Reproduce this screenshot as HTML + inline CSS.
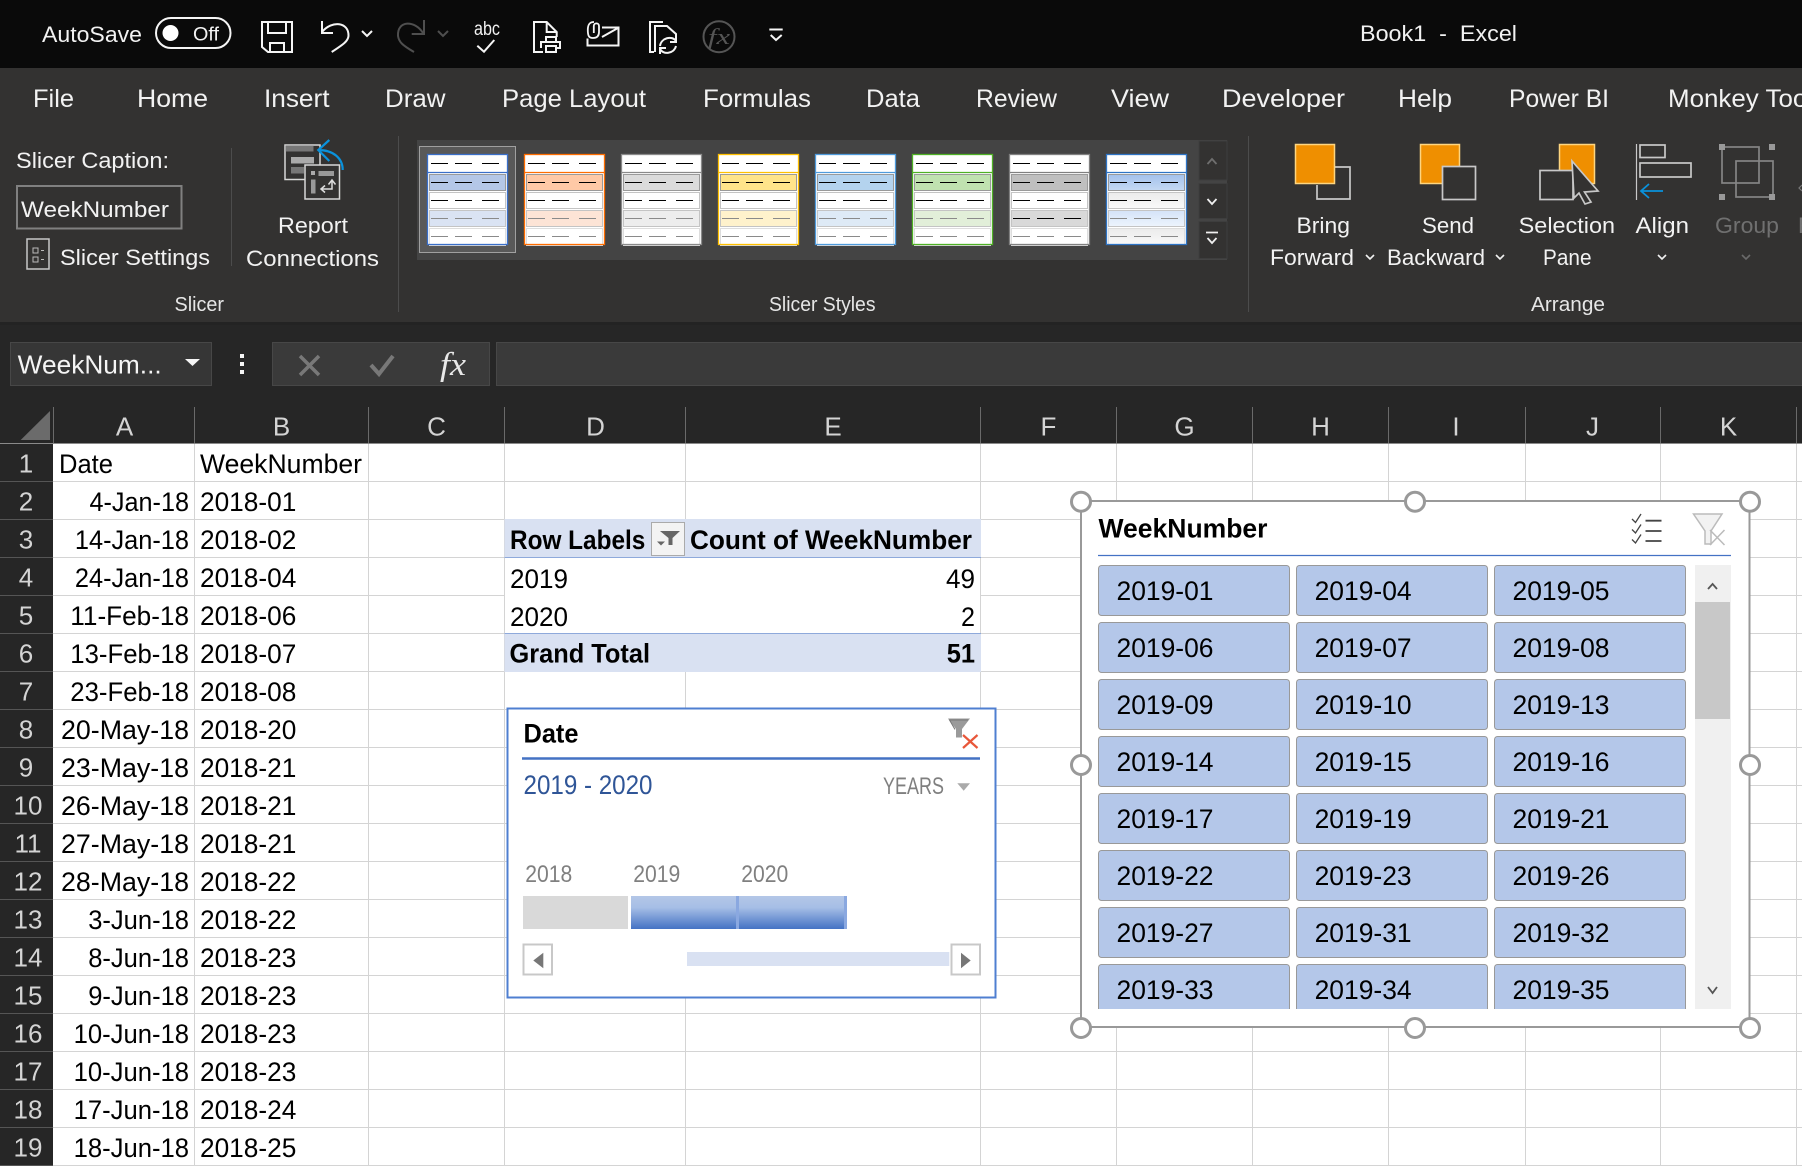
<!DOCTYPE html>
<html><head><meta charset="utf-8"><title>Book1 - Excel</title>
<style>
html,body{margin:0;padding:0;background:#fff;width:1802px;height:1166px;overflow:hidden}
svg{display:block;font-family:"Liberation Sans",sans-serif}
.w{fill:#f2f2f2}
.tab{fill:#f2f2f2;font-size:25px}
.lb{fill:#f2f2f2;font-size:22.5px}
.grp{fill:#e6e6e6;font-size:20px}
.hd{fill:#d4d4d4;font-size:26px;text-anchor:middle}
.c{fill:#000;font-size:27px;transform:translateY(.5px)}
.b{fill:#000;font-size:27px;font-weight:bold}
.s{fill:#000;font-size:27px}
.ic{fill:none;stroke:#f5f5f5;stroke-width:2}
.gr{stroke:#d4d4d4;stroke-width:1;fill:none}
.hdl{fill:#fff;stroke:#999;stroke-width:3}
.btn{fill:#b4c7e9;stroke:#999;stroke-width:1}
</style></head><body>
<svg width="1802" height="1166" viewBox="0 0 1802 1166" xmlns="http://www.w3.org/2000/svg">
<defs>
<linearGradient id="bar" x1="0" y1="0" x2="0" y2="1"><stop offset="0" stop-color="#b4c7e7"/><stop offset=".35" stop-color="#a6bee6"/><stop offset="1" stop-color="#4472c4"/></linearGradient>
<linearGradient id="g1" x1="0" y1="0" x2="0" y2="1"><stop offset="0" stop-color="#a3c1ec"/><stop offset="1" stop-color="#c5d9f3"/></linearGradient>
<linearGradient id="g2" x1="0" y1="0" x2="0" y2="1"><stop offset="0" stop-color="#ebebeb"/><stop offset="1" stop-color="#f9f9f9"/></linearGradient>
<linearGradient id="g3" x1="0" y1="0" x2="0" y2="1"><stop offset="0" stop-color="#d4e3f8"/><stop offset="1" stop-color="#edf4fd"/></linearGradient>
<g id="t">
<rect x=".5" y=".5" width="80" height="90" fill="#fff"/>
<path d="M0 18.5H81" stroke="var(--b)" stroke-width="1.2"/>
<rect x="2.5" y="20.5" width="76" height="16" fill="var(--f1)" stroke="#9a9a9a"/>
<rect x="2.5" y="38.5" width="76" height="16" fill="#fff" stroke="#c4c4c4"/>
<rect x="2.5" y="56.5" width="76" height="16" fill="var(--f2)" stroke="#c4c4c4"/>
<rect x="2.5" y="74.5" width="76" height="17" fill="#fff" stroke="#ddd"/>
<path d="M4 9.5h17M28 9.5h17M55 9.5h17M4 28.5h17M28 28.5h17M55 28.5h17M4 46.5h17M28 46.5h17M55 46.5h17" stroke="#000" stroke-width="1"/>
<path d="M4 64.5h17M28 64.5h17M55 64.5h17" stroke="var(--l,#8a8a8a)" stroke-width="1"/>
<path d="M4 82.5h17M28 82.5h17M55 82.5h17" stroke="#8a8a8a" stroke-width="1"/>
<rect x=".5" y=".5" width="80" height="90" fill="none" stroke="var(--b)" stroke-width="1.3"/>
</g>
</defs>

<!-- title bar -->
<rect width="1802" height="68" fill="#0a0a0a"/>
<rect y="68" width="1802" height="254" fill="#333231"/>
<rect y="322" width="1802" height="844" fill="#262626"/>
<rect y="322" width="1802" height="3" fill="#232323"/>

<text class="w" x="42" y="42" font-size="22" textLength="100" lengthAdjust="spacingAndGlyphs">AutoSave</text>
<rect x="156" y="18" width="74.500" height="30" rx="15" fill="none" stroke="#f5f5f5" stroke-width="2"/>
<circle cx="170.500" cy="33" r="8" fill="#fff"/>
<text class="w" x="193" y="40.500" font-size="19" textLength="26" lengthAdjust="spacingAndGlyphs">Off</text>

<!-- save -->
<path class="ic" d="M262 22H292V52H268L262 47ZM268 22V33H286V22M270 52V43H284V52"/>
<!-- undo -->
<path class="ic" d="M322 21V33H333M322 32C332 20 349 22 348.500 36C348 41 344 44 331.700 52"/>
<path class="ic" d="M362 31L367 36L372 31"/>
<!-- redo -->
<path class="ic" style="stroke:#4f4f4f" d="M424 20V34H411.700M423 33C415 20 397 20 398 36C399 42 402 45 414 52"/>
<path class="ic" style="stroke:#4f4f4f" d="M438 31L443 36L448 31"/>
<!-- spell -->
<text class="w" x="474" y="35" font-size="19" textLength="26" lengthAdjust="spacingAndGlyphs">abc</text>
<path class="ic" d="M477.300 45.700L484 51.700L494.300 40"/>
<!-- print -->
<path class="ic" d="M543 52H534V22H546.700L556.700 32V37M546.700 22V32H556.700M546 42V37H556V42M541 48V42H560V48H556M546 46H556V52H546Z"/>
<!-- mail -->
<path class="ic" d="M602 27.500H618.500V45.500H587.500V38.500M602 37L618 28"/>
<path class="ic" style="stroke-width:1.800" d="M594 22C588.500 22 587.800 26 587.800 30C587.800 36 589 38 593 38C597 38 599 36 599 32V26C599 22.500 593.800 22.500 593.800 26V33"/>
<!-- doc refresh -->
<path class="ic" d="M654 52H650V22H663M655 52V26H667L676 34V38"/>
<path class="ic" d="M660 46C661 38 672 35 676 41M676 36V42H670M676 46C674 54 663 55 660 49M660 54V48H666"/>
<!-- fx -->
<circle cx="719" cy="36.700" r="15.500" fill="none" stroke="#555" stroke-width="2"/>
<text x="708" y="44" font-size="22" font-style="italic" font-family="Liberation Serif,serif" fill="#555" textLength="22" lengthAdjust="spacingAndGlyphs">fx</text>
<!-- qat more -->
<path class="ic" d="M769.300 29.500H782.700M770.700 35L776 40L781.700 35"/>

<text class="w" x="1360" y="41" font-size="22" textLength="157" lengthAdjust="spacingAndGlyphs" style="white-space:pre">Book1  -  Excel</text>

<!-- tabs -->
<text class="tab" x="33" y="107" textLength="41" lengthAdjust="spacingAndGlyphs">File</text>
<text class="tab" x="137" y="107" textLength="71" lengthAdjust="spacingAndGlyphs">Home</text>
<text class="tab" x="264" y="107" textLength="65.500" lengthAdjust="spacingAndGlyphs">Insert</text>
<text class="tab" x="385" y="107" textLength="60.500" lengthAdjust="spacingAndGlyphs">Draw</text>
<text class="tab" x="502" y="107" textLength="144" lengthAdjust="spacingAndGlyphs">Page Layout</text>
<text class="tab" x="703" y="107" textLength="108" lengthAdjust="spacingAndGlyphs">Formulas</text>
<text class="tab" x="866" y="107" textLength="54" lengthAdjust="spacingAndGlyphs">Data</text>
<text class="tab" x="976" y="107" textLength="81" lengthAdjust="spacingAndGlyphs">Review</text>
<text class="tab" x="1111" y="107" textLength="58" lengthAdjust="spacingAndGlyphs">View</text>
<text class="tab" x="1222" y="107" textLength="123" lengthAdjust="spacingAndGlyphs">Developer</text>
<text class="tab" x="1398" y="107" textLength="54" lengthAdjust="spacingAndGlyphs">Help</text>
<text class="tab" x="1509" y="107" textLength="100" lengthAdjust="spacingAndGlyphs">Power BI</text>
<text class="tab" x="1668" y="107" textLength="158" lengthAdjust="spacingAndGlyphs">Monkey Tools</text>

<!-- slicer group -->
<text class="lb" x="16" y="168" textLength="153" lengthAdjust="spacingAndGlyphs">Slicer Caption:</text>
<rect x="17" y="186" width="164.500" height="42.500" fill="#333231" stroke="#808080" stroke-width="2"/>
<text class="lb" x="21" y="217" textLength="148" lengthAdjust="spacingAndGlyphs">WeekNumber</text>
<rect x="27" y="239" width="22" height="30" fill="none" stroke="#c8c8c8" stroke-width="1.500"/>
<path d="M33 248h5v5h-5zM33 257h5v5h-5z" fill="none" stroke="#bbb" stroke-width="1"/>
<path d="M41 250.500h3M41 259.500h3" stroke="#bbb"/>
<text class="lb" x="60" y="265" textLength="150" lengthAdjust="spacingAndGlyphs">Slicer Settings</text>
<path d="M231.500 148V266M398.500 136V312" stroke="#4c4c4c" stroke-width="1"/>
<!-- report connections -->
<rect x="285" y="145" width="35" height="34.500" fill="none" stroke="#d8d8d8" stroke-width="1.500"/>
<rect x="285.500" y="145.500" width="28" height="6" fill="#777"/>
<rect x="291" y="157" width="23" height="6.500" fill="#aaa"/>
<rect x="291" y="167" width="13" height="6.500" fill="#777"/>
<rect x="305" y="165" width="34.500" height="34" fill="#333231" stroke="#d8d8d8" stroke-width="1.500"/>
<rect x="311" y="171" width="4" height="4" fill="#aaa"/>
<rect x="318.500" y="171" width="15.500" height="5" fill="#999"/>
<rect x="311" y="179.500" width="4.500" height="14" fill="#999"/>
<path d="M332 181V189H321.500M328.500 184.500L332 180L335.500 184.500M325 185.500L321 189L325 192.500" fill="none" stroke="#ddd" stroke-width="1.500"/>
<path d="M342.700 170C342.700 158 333 150 318.300 150M329.300 140L318.300 150L329.300 161" fill="none" stroke="#0a92dc" stroke-width="2.200"/>
<text class="lb" x="278" y="233" textLength="70" lengthAdjust="spacingAndGlyphs">Report</text>
<text class="lb" x="246" y="266" textLength="133" lengthAdjust="spacingAndGlyphs">Connections</text>
<text class="grp" x="174.500" y="311" textLength="49.500" lengthAdjust="spacingAndGlyphs">Slicer</text>

<!-- gallery -->
<rect x="417" y="140" width="810" height="120" fill="#444"/>
<rect x="419.500" y="146.500" width="96" height="106" fill="#595959" stroke="#a0a0a0" stroke-width="1"/>
<use href="#t" x="427" y="154" style="--b:#3a6fc9;--f1:#b4c7e7;--f2:#dae3f3"/>
<use href="#t" x="524" y="154" style="--b:#ff6d00;--f1:#ffc9a6;--f2:#fde4d6"/>
<use href="#t" x="621" y="154" style="--b:#8a8a8a;--f1:#dbdbdb;--f2:#ededed"/>
<use href="#t" x="718" y="154" style="--b:#ffc000;--f1:#ffe48a;--f2:#fff2cc"/>
<use href="#t" x="815" y="154" style="--b:#4f9bdc;--f1:#b4d3ee;--f2:#deeaf6"/>
<use href="#t" x="912" y="154" style="--b:#4fb125;--f1:#c0e2b0;--f2:#e2efd9"/>
<use href="#t" x="1009" y="154" style="--b:#808080;--f1:#bfbfbf;--f2:#d9d9d9;--l:#000"/>
<!-- gradient tile -->
<rect x="1106.500" y="154.500" width="80" height="90" fill="#fff"/>
<path d="M1106 172.500H1187" stroke="#2e74c5" stroke-width="1.200"/>
<rect x="1108.500" y="174.500" width="76" height="16" fill="url(#g1)" stroke="#9a9a9a"/>
<rect x="1108.500" y="192.500" width="76" height="16" fill="url(#g2)" stroke="#c4c4c4"/>
<rect x="1108.500" y="210.500" width="76" height="16" fill="url(#g3)" stroke="#c4c4c4"/>
<rect x="1108.500" y="228.500" width="76" height="16" fill="url(#g2)" stroke="#ddd"/>
<path d="M1110 163.500h17M1134 163.500h17M1161 163.500h17M1110 182.500h17M1134 182.500h17M1161 182.500h17M1110 200.500h17M1134 200.500h17M1161 200.500h17" stroke="#000"/>
<path d="M1110 218.500h17M1134 218.500h17M1161 218.500h17M1110 236.500h17M1134 236.500h17M1161 236.500h17" stroke="#8a8a8a"/>
<rect x="1106.500" y="154.500" width="80" height="90" fill="none" stroke="#2e74c5" stroke-width="1.300"/>

<rect x="1199" y="141" width="28" height="39" fill="#333231" stroke="#3e3e3e"/>
<rect x="1199" y="183.500" width="28" height="35" fill="#333231" stroke="#3e3e3e"/>
<rect x="1199" y="221.500" width="28" height="37" fill="#333231" stroke="#3e3e3e"/>
<path d="M1207.500 164L1212 159L1216.500 164" fill="none" stroke="#6f6f6f" stroke-width="1.800"/>
<path d="M1207.500 199L1212 204L1216.500 199" fill="none" stroke="#f0f0f0" stroke-width="1.800"/>
<path d="M1206 232.500H1218M1207.500 238L1212 243L1216.500 238" fill="none" stroke="#f0f0f0" stroke-width="1.800"/>
<text class="grp" x="769" y="311" textLength="106.500" lengthAdjust="spacingAndGlyphs">Slicer Styles</text>
<path d="M1248.500 136V312" stroke="#4c4c4c" stroke-width="1"/>

<!-- arrange -->
<path d="M1335 167H1350V199H1317V185" fill="none" stroke="#c8c8c8" stroke-width="1.700"/>
<rect x="1295.500" y="144.500" width="39" height="39" fill="#ef8f00" stroke="#fdd580" stroke-width="1.500"/>
<rect x="1420.500" y="144.500" width="39" height="39" fill="#ef8f00" stroke="#fdd580" stroke-width="1.500"/>
<rect x="1442.500" y="166.500" width="33" height="33" fill="#333231" stroke="#c8c8c8" stroke-width="1.700"/>
<rect x="1559.500" y="144.500" width="35" height="39" fill="#ef8f00" stroke="#fdd580" stroke-width="1.500"/>
<rect x="1540" y="170.500" width="33" height="29" fill="#333231" stroke="#c8c8c8" stroke-width="1.700"/>
<path d="M1572 161L1598 191L1584.500 192L1591 202L1585 204L1579 193L1574 198Z" fill="#333231" stroke="#c8c8c8" stroke-width="1.700"/>
<path d="M1636.500 144V200" stroke="#c8c8c8" stroke-width="1.200"/>
<rect x="1640" y="145" width="25" height="12.500" fill="none" stroke="#c8c8c8" stroke-width="1.700"/>
<rect x="1640" y="163" width="51" height="14" fill="none" stroke="#c8c8c8" stroke-width="1.700"/>
<path d="M1663 191H1641M1649 184L1641 191L1649 198" fill="none" stroke="#0a92dc" stroke-width="1.800"/>
<rect x="1722" y="147" width="37" height="36" fill="none" stroke="#858585" stroke-width="1.700"/>
<rect x="1736" y="161" width="37" height="36" fill="none" stroke="#858585" stroke-width="1.700"/>
<path d="M1719.500 144.500h5v5h-5zM1769.500 144.500h5v5h-5zM1719.500 194.500h5v5h-5zM1769.500 194.500h5v5h-5z" fill="#999" stroke="#999"/>
<path d="M1802 185L1799 188L1802 191" fill="none" stroke="#777" stroke-width="1.200"/>
<text class="lb" x="1296.500" y="233" textLength="53.500" lengthAdjust="spacingAndGlyphs">Bring</text>
<text class="lb" x="1270" y="265" textLength="84" lengthAdjust="spacingAndGlyphs">Forward</text>
<text class="lb" x="1422" y="233" textLength="52" lengthAdjust="spacingAndGlyphs">Send</text>
<text class="lb" x="1387" y="265" textLength="98" lengthAdjust="spacingAndGlyphs">Backward</text>
<text class="lb" x="1518.700" y="233" textLength="96.300" lengthAdjust="spacingAndGlyphs">Selection</text>
<text class="lb" x="1543" y="265" textLength="48.500" lengthAdjust="spacingAndGlyphs">Pane</text>
<text class="lb" x="1635.500" y="233" textLength="53.500" lengthAdjust="spacingAndGlyphs">Align</text>
<text class="lb" style="fill:#707070" x="1715" y="233" textLength="64" lengthAdjust="spacingAndGlyphs">Group</text>
<text class="lb" style="fill:#707070" x="1798" y="233">R</text>
<path d="M1366 255L1370 259L1374 255M1496 255L1500 259L1504 255M1658 255L1662 259L1666 255" fill="none" stroke="#f0f0f0" stroke-width="1.600"/>
<path d="M1742 255L1746 259L1750 255" fill="none" stroke="#6a6a6a" stroke-width="1.600"/>
<text class="grp" x="1531" y="311" textLength="74" lengthAdjust="spacingAndGlyphs">Arrange</text>

<!-- formula bar -->
<rect x="10.500" y="342.500" width="201" height="43" fill="#363636" stroke="#474747"/>
<text x="17.700" y="373.500" font-size="26" fill="#f5f5f5" textLength="144" lengthAdjust="spacingAndGlyphs">WeekNum...</text>
<path d="M185 359H200L192.500 366Z" fill="#f5f5f5"/>
<path d="M240 354h4v4h-4zM240 362h4v4h-4zM240 370h4v4h-4z" fill="#f5f5f5"/>
<rect x="272.500" y="342.500" width="217" height="43" fill="#3a3a3a" stroke="#474747"/>
<path d="M300 356L319 375M319 356L300 375" stroke="#787878" stroke-width="3.500" fill="none"/>
<path d="M371 365L379 374L393 356" stroke="#787878" stroke-width="4" fill="none"/>
<text x="440" y="375" font-family="Liberation Serif,serif" font-style="italic" font-size="33" fill="#e8e8e8" textLength="26" lengthAdjust="spacingAndGlyphs">fx</text>
<rect x="496.500" y="342.500" width="1306" height="43" fill="#3a3a3a" stroke="#474747"/>

<!-- column headers -->
<path d="M20.700 440L50 411V440Z" fill="#6b6b6b"/>
<path d="M53.500 407V443M194.500 407V443M368.500 407V443M504.500 407V443M685.500 407V443M980.500 407V443M1116.500 407V443M1252.500 407V443M1388.500 407V443M1525.500 407V443M1660.500 407V443M1796.500 407V443" stroke="#6a6a6a" stroke-width="1"/>
<text class="hd" x="124.500" y="435.500">A</text>
<text class="hd" x="281.500" y="435.500">B</text>
<text class="hd" x="436.500" y="435.500">C</text>
<text class="hd" x="595.500" y="435.500">D</text>
<text class="hd" x="833" y="435.500">E</text>
<text class="hd" x="1048.500" y="435.500">F</text>
<text class="hd" x="1184.500" y="435.500">G</text>
<text class="hd" x="1320.500" y="435.500">H</text>
<text class="hd" x="1456" y="435.500">I</text>
<text class="hd" x="1592.500" y="435.500">J</text>
<text class="hd" x="1728.500" y="435.500">K</text>

<!-- sheet -->
<rect x="53" y="443" width="1749" height="723" fill="#fff"/>
<rect y="443" width="1802" height="1" fill="#8a8a8a"/>
<path d="M0 481.500H53M0 519.500H53M0 557.500H53M0 595.500H53M0 633.500H53M0 671.500H53M0 709.500H53M0 747.500H53M0 785.500H53M0 823.500H53M0 861.500H53M0 899.500H53M0 937.500H53M0 975.500H53M0 1013.500H53M0 1051.500H53M0 1089.500H53M0 1127.500H53M0 1165.500H53" stroke="#555"/>
<path class="gr" d="M194.500 444V1166M368.500 444V1166M504.500 444V1166M685.500 444V1166M980.500 444V1166M1116.500 444V1166M1252.500 444V1166M1388.500 444V1166M1525.500 444V1166M1660.500 444V1166M1796.500 444V1166"/>
<path class="gr" d="M53 481.500H1802M53 519.500H1802M53 557.500H1802M53 595.500H1802M53 633.500H1802M53 671.500H1802M53 709.500H1802M53 747.500H1802M53 785.500H1802M53 823.500H1802M53 861.500H1802M53 899.500H1802M53 937.500H1802M53 975.500H1802M53 1013.500H1802M53 1051.500H1802M53 1089.500H1802M53 1127.500H1802M53 1165.500H1802"/>

<!-- row numbers -->
<g fill="#d4d4d4" font-size="26" text-anchor="middle">
<text x="26" y="472.700">1</text><text x="26" y="510.700">2</text><text x="26" y="548.700">3</text><text x="26" y="586.700">4</text><text x="26" y="624.700">5</text><text x="26" y="662.700">6</text><text x="26" y="700.700">7</text><text x="26" y="738.700">8</text><text x="26" y="776.700">9</text><text x="28" y="814.700">10</text><text x="28" y="852.700">11</text><text x="28" y="890.700">12</text><text x="28" y="928.700">13</text><text x="28" y="966.700">14</text><text x="28" y="1004.700">15</text><text x="28" y="1042.700">16</text><text x="28" y="1080.700">17</text><text x="28" y="1118.700">18</text><text x="28" y="1156.700">19</text>
</g>

<!-- column A -->
<text class="c" x="59" y="472.700" textLength="54" lengthAdjust="spacingAndGlyphs">Date</text>
<text class="c" x="89.500" y="510.700" textLength="99.500" lengthAdjust="spacingAndGlyphs">4-Jan-18</text>
<text class="c" x="74.900" y="548.700" textLength="114.100" lengthAdjust="spacingAndGlyphs">14-Jan-18</text>
<text class="c" x="74.900" y="586.700" textLength="114.100" lengthAdjust="spacingAndGlyphs">24-Jan-18</text>
<text class="c" x="70.300" y="624.700" textLength="118.700" lengthAdjust="spacingAndGlyphs">11-Feb-18</text>
<text class="c" x="70.300" y="662.700" textLength="118.700" lengthAdjust="spacingAndGlyphs">13-Feb-18</text>
<text class="c" x="70.300" y="700.700" textLength="118.700" lengthAdjust="spacingAndGlyphs">23-Feb-18</text>
<text class="c" x="61" y="738.700" textLength="128" lengthAdjust="spacingAndGlyphs">20-May-18</text>
<text class="c" x="61" y="776.700" textLength="128" lengthAdjust="spacingAndGlyphs">23-May-18</text>
<text class="c" x="61" y="814.700" textLength="128" lengthAdjust="spacingAndGlyphs">26-May-18</text>
<text class="c" x="61" y="852.700" textLength="128" lengthAdjust="spacingAndGlyphs">27-May-18</text>
<text class="c" x="61" y="890.700" textLength="128" lengthAdjust="spacingAndGlyphs">28-May-18</text>
<text class="c" x="88.200" y="928.700" textLength="100.800" lengthAdjust="spacingAndGlyphs">3-Jun-18</text>
<text class="c" x="88.200" y="966.700" textLength="100.800" lengthAdjust="spacingAndGlyphs">8-Jun-18</text>
<text class="c" x="88.200" y="1004.700" textLength="100.800" lengthAdjust="spacingAndGlyphs">9-Jun-18</text>
<text class="c" x="73.600" y="1042.700" textLength="115.400" lengthAdjust="spacingAndGlyphs">10-Jun-18</text>
<text class="c" x="73.600" y="1080.700" textLength="115.400" lengthAdjust="spacingAndGlyphs">10-Jun-18</text>
<text class="c" x="73.600" y="1118.700" textLength="115.400" lengthAdjust="spacingAndGlyphs">17-Jun-18</text>
<text class="c" x="73.600" y="1156.700" textLength="115.400" lengthAdjust="spacingAndGlyphs">18-Jun-18</text>
<!-- column B -->
<text class="c" x="200" y="472.700" textLength="162" lengthAdjust="spacingAndGlyphs">WeekNumber</text>
<text class="c" x="200" y="510.700" textLength="96.300" lengthAdjust="spacingAndGlyphs">2018-01</text>
<text class="c" x="200" y="548.700" textLength="96.300" lengthAdjust="spacingAndGlyphs">2018-02</text>
<text class="c" x="200" y="586.700" textLength="96.300" lengthAdjust="spacingAndGlyphs">2018-04</text>
<text class="c" x="200" y="624.700" textLength="96.300" lengthAdjust="spacingAndGlyphs">2018-06</text>
<text class="c" x="200" y="662.700" textLength="96.300" lengthAdjust="spacingAndGlyphs">2018-07</text>
<text class="c" x="200" y="700.700" textLength="96.300" lengthAdjust="spacingAndGlyphs">2018-08</text>
<text class="c" x="200" y="738.700" textLength="96.300" lengthAdjust="spacingAndGlyphs">2018-20</text>
<text class="c" x="200" y="776.700" textLength="96.300" lengthAdjust="spacingAndGlyphs">2018-21</text>
<text class="c" x="200" y="814.700" textLength="96.300" lengthAdjust="spacingAndGlyphs">2018-21</text>
<text class="c" x="200" y="852.700" textLength="96.300" lengthAdjust="spacingAndGlyphs">2018-21</text>
<text class="c" x="200" y="890.700" textLength="96.300" lengthAdjust="spacingAndGlyphs">2018-22</text>
<text class="c" x="200" y="928.700" textLength="96.300" lengthAdjust="spacingAndGlyphs">2018-22</text>
<text class="c" x="200" y="966.700" textLength="96.300" lengthAdjust="spacingAndGlyphs">2018-23</text>
<text class="c" x="200" y="1004.700" textLength="96.300" lengthAdjust="spacingAndGlyphs">2018-23</text>
<text class="c" x="200" y="1042.700" textLength="96.300" lengthAdjust="spacingAndGlyphs">2018-23</text>
<text class="c" x="200" y="1080.700" textLength="96.300" lengthAdjust="spacingAndGlyphs">2018-23</text>
<text class="c" x="200" y="1118.700" textLength="96.300" lengthAdjust="spacingAndGlyphs">2018-24</text>
<text class="c" x="200" y="1156.700" textLength="96.300" lengthAdjust="spacingAndGlyphs">2018-25</text>

<!-- pivot -->
<rect x="504.500" y="519" width="476.500" height="38.500" fill="#d9e1f2"/>
<path d="M504.500 557.500H981" stroke="#8ea9db"/>
<rect x="504" y="558" width="477" height="75" fill="#fff"/>
<path d="M504.500 558V633M980.500 558V633M504 595.500H505M980 595.500H981" stroke="#d4d4d4"/>
<rect x="504.500" y="633" width="476.500" height="39" fill="#d9e1f2"/>
<path d="M504.500 633.500H981" stroke="#8ea9db"/>
<rect x="651.500" y="522.500" width="33" height="33" fill="#f3f3f3" stroke="#aaa"/>
<path d="M660 531H680L672.500 538V545H668.500V538Z" fill="#666"/>
<path d="M657 541.500H665L661 545.500Z" fill="#666"/>
<text class="b" x="510" y="549" textLength="135.300" lengthAdjust="spacingAndGlyphs">Row Labels</text>
<text class="b" x="690" y="549" textLength="282" lengthAdjust="spacingAndGlyphs">Count of WeekNumber</text>
<text class="c" x="510" y="587.300" textLength="58" lengthAdjust="spacingAndGlyphs">2019</text>
<text class="c" x="946" y="587.300" textLength="29" lengthAdjust="spacingAndGlyphs">49</text>
<text class="c" x="510" y="625.300" textLength="58" lengthAdjust="spacingAndGlyphs">2020</text>
<text class="c" x="961" y="625.300" textLength="14" lengthAdjust="spacingAndGlyphs">2</text>
<text class="b" x="509.500" y="662.700" textLength="140.500" lengthAdjust="spacingAndGlyphs">Grand Total</text>
<text class="b" x="946.700" y="662.700" textLength="28.300" lengthAdjust="spacingAndGlyphs">51</text>

<!-- date slicer -->
<rect x="507.500" y="708.500" width="488" height="289" fill="#fff" stroke="#4f7fd1" stroke-width="2"/>
<text class="b" x="523.500" y="742.700" textLength="55" lengthAdjust="spacingAndGlyphs">Date</text>
<path d="M522 758.500H980" stroke="#4472c4" stroke-width="2.500"/>
<path d="M948 718.500H970L962 729V737.500H956V729Z" fill="#9a9a9a"/>
<path d="M955 729.500L949.500 720H968" fill="none" stroke="#777" stroke-width="1"/>
<path d="M963 735L977.500 748M977.500 735L963 748" stroke="#e8573a" stroke-width="2.200" fill="none"/>
<text x="523.500" y="794" font-size="27" fill="#2f5597" textLength="129" lengthAdjust="spacingAndGlyphs">2019 - 2020</text>
<text x="883" y="794" font-size="24" fill="#7f7f7f" textLength="61" lengthAdjust="spacingAndGlyphs">YEARS</text>
<path d="M957.300 783.300H970L963.700 790.700Z" fill="#aaa"/>
<text x="525.200" y="882" font-size="24" fill="#808080" textLength="47" lengthAdjust="spacingAndGlyphs">2018</text>
<text x="633.300" y="882" font-size="24" fill="#808080" textLength="47" lengthAdjust="spacingAndGlyphs">2019</text>
<text x="741.300" y="882" font-size="24" fill="#808080" textLength="47" lengthAdjust="spacingAndGlyphs">2020</text>
<rect x="523" y="896" width="105" height="33" fill="#d9d9d9"/>
<rect x="631" y="896" width="105" height="33" fill="url(#bar)"/>
<rect x="736" y="896" width="3" height="33" fill="#8aa8e0"/>
<rect x="739" y="896" width="105" height="33" fill="url(#bar)"/>
<rect x="844" y="896" width="3" height="33" fill="#8aa8e0"/>
<rect x="523.500" y="944.500" width="28.500" height="30" fill="#fff" stroke="#c8c8c8" stroke-width="2"/>
<path d="M543.300 952.700V968.300L533.300 960.500Z" fill="#777"/>
<rect x="687" y="952" width="262.300" height="14" fill="#d9e1f2"/>
<rect x="951.500" y="944.500" width="28.500" height="30" fill="#fff" stroke="#c8c8c8" stroke-width="2"/>
<path d="M961 952.700V968.300L970.700 960.500Z" fill="#777"/>

<!-- weeknumber slicer -->
<rect x="1081" y="501" width="668.500" height="526" fill="#fff" stroke="#999" stroke-width="2"/>
<text class="b" x="1098.500" y="537.700" textLength="169" lengthAdjust="spacingAndGlyphs">WeekNumber</text>
<path d="M1098 555.500H1731" stroke="#4472c4" stroke-width="1.200"/>
<path d="M1645.500 520.700H1661.500M1645.500 531H1661.500M1645.500 541H1661.500" stroke="#444" stroke-width="1.800"/>
<path d="M1632 519L1635.500 522.500L1641 514M1632 529.500L1635.500 533L1641 524.500M1632 539.500L1635.500 543L1641 534.500" fill="none" stroke="#444" stroke-width="1.300"/>
<path d="M1693.500 514H1722L1711 531V544H1705V531Z" fill="#f2f2f2" stroke="#bbb" stroke-width="1.500"/>
<path d="M1710 530L1724.500 545M1724.500 530L1710 545" stroke="#bbb" stroke-width="1.500"/>

<rect x="1695" y="565" width="36" height="444" fill="#f0f0f0"/>
<rect x="1695" y="602" width="35" height="117" fill="#c8c8c8"/>
<path d="M1708 589L1712.600 584L1717 589" fill="none" stroke="#555" stroke-width="1.800"/>
<path d="M1708 987L1712.600 993L1717 987" fill="none" stroke="#555" stroke-width="1.800"/>

<rect class="btn" x="1098.500" y="565.500" width="191" height="50" rx="3"/><rect class="btn" x="1296.500" y="565.500" width="191" height="50" rx="3"/><rect class="btn" x="1494.500" y="565.500" width="191" height="50" rx="3"/>
<rect class="btn" x="1098.500" y="622.500" width="191" height="50" rx="3"/><rect class="btn" x="1296.500" y="622.500" width="191" height="50" rx="3"/><rect class="btn" x="1494.500" y="622.500" width="191" height="50" rx="3"/>
<rect class="btn" x="1098.500" y="679.500" width="191" height="50" rx="3"/><rect class="btn" x="1296.500" y="679.500" width="191" height="50" rx="3"/><rect class="btn" x="1494.500" y="679.500" width="191" height="50" rx="3"/>
<rect class="btn" x="1098.500" y="736.500" width="191" height="50" rx="3"/><rect class="btn" x="1296.500" y="736.500" width="191" height="50" rx="3"/><rect class="btn" x="1494.500" y="736.500" width="191" height="50" rx="3"/>
<rect class="btn" x="1098.500" y="793.500" width="191" height="50" rx="3"/><rect class="btn" x="1296.500" y="793.500" width="191" height="50" rx="3"/><rect class="btn" x="1494.500" y="793.500" width="191" height="50" rx="3"/>
<rect class="btn" x="1098.500" y="850.500" width="191" height="50" rx="3"/><rect class="btn" x="1296.500" y="850.500" width="191" height="50" rx="3"/><rect class="btn" x="1494.500" y="850.500" width="191" height="50" rx="3"/>
<rect class="btn" x="1098.500" y="907.500" width="191" height="50" rx="3"/><rect class="btn" x="1296.500" y="907.500" width="191" height="50" rx="3"/><rect class="btn" x="1494.500" y="907.500" width="191" height="50" rx="3"/>
<rect class="btn" x="1098.500" y="964.500" width="191" height="50" rx="3"/><rect class="btn" x="1296.500" y="964.500" width="191" height="50" rx="3"/><rect class="btn" x="1494.500" y="964.500" width="191" height="50" rx="3"/>
<rect x="1090" y="1009" width="600" height="7" fill="#fff"/>

<circle class="hdl" cx="1081" cy="501.700" r="9.500"/><circle class="hdl" cx="1415" cy="501.700" r="9.500"/><circle class="hdl" cx="1750" cy="501.700" r="9.500"/>
<circle class="hdl" cx="1081" cy="765" r="9.500"/><circle class="hdl" cx="1750" cy="765" r="9.500"/>
<circle class="hdl" cx="1081" cy="1028" r="9.500"/><circle class="hdl" cx="1415" cy="1028" r="9.500"/><circle class="hdl" cx="1750" cy="1028" r="9.500"/>

<text class="s" x="1116.500" y="600" textLength="97" lengthAdjust="spacingAndGlyphs">2019-01</text><text class="s" x="1314.600" y="600" textLength="97" lengthAdjust="spacingAndGlyphs">2019-04</text><text class="s" x="1512.500" y="600" textLength="97" lengthAdjust="spacingAndGlyphs">2019-05</text>
<text class="s" x="1116.500" y="657" textLength="97" lengthAdjust="spacingAndGlyphs">2019-06</text><text class="s" x="1314.600" y="657" textLength="97" lengthAdjust="spacingAndGlyphs">2019-07</text><text class="s" x="1512.500" y="657" textLength="97" lengthAdjust="spacingAndGlyphs">2019-08</text>
<text class="s" x="1116.500" y="714" textLength="97" lengthAdjust="spacingAndGlyphs">2019-09</text><text class="s" x="1314.600" y="714" textLength="97" lengthAdjust="spacingAndGlyphs">2019-10</text><text class="s" x="1512.500" y="714" textLength="97" lengthAdjust="spacingAndGlyphs">2019-13</text>
<text class="s" x="1116.500" y="771" textLength="97" lengthAdjust="spacingAndGlyphs">2019-14</text><text class="s" x="1314.600" y="771" textLength="97" lengthAdjust="spacingAndGlyphs">2019-15</text><text class="s" x="1512.500" y="771" textLength="97" lengthAdjust="spacingAndGlyphs">2019-16</text>
<text class="s" x="1116.500" y="828" textLength="97" lengthAdjust="spacingAndGlyphs">2019-17</text><text class="s" x="1314.600" y="828" textLength="97" lengthAdjust="spacingAndGlyphs">2019-19</text><text class="s" x="1512.500" y="828" textLength="97" lengthAdjust="spacingAndGlyphs">2019-21</text>
<text class="s" x="1116.500" y="885" textLength="97" lengthAdjust="spacingAndGlyphs">2019-22</text><text class="s" x="1314.600" y="885" textLength="97" lengthAdjust="spacingAndGlyphs">2019-23</text><text class="s" x="1512.500" y="885" textLength="97" lengthAdjust="spacingAndGlyphs">2019-26</text>
<text class="s" x="1116.500" y="942" textLength="97" lengthAdjust="spacingAndGlyphs">2019-27</text><text class="s" x="1314.600" y="942" textLength="97" lengthAdjust="spacingAndGlyphs">2019-31</text><text class="s" x="1512.500" y="942" textLength="97" lengthAdjust="spacingAndGlyphs">2019-32</text>
<text class="s" x="1116.500" y="999" textLength="97" lengthAdjust="spacingAndGlyphs">2019-33</text><text class="s" x="1314.600" y="999" textLength="97" lengthAdjust="spacingAndGlyphs">2019-34</text><text class="s" x="1512.500" y="999" textLength="97" lengthAdjust="spacingAndGlyphs">2019-35</text>
</svg>
</body></html>
